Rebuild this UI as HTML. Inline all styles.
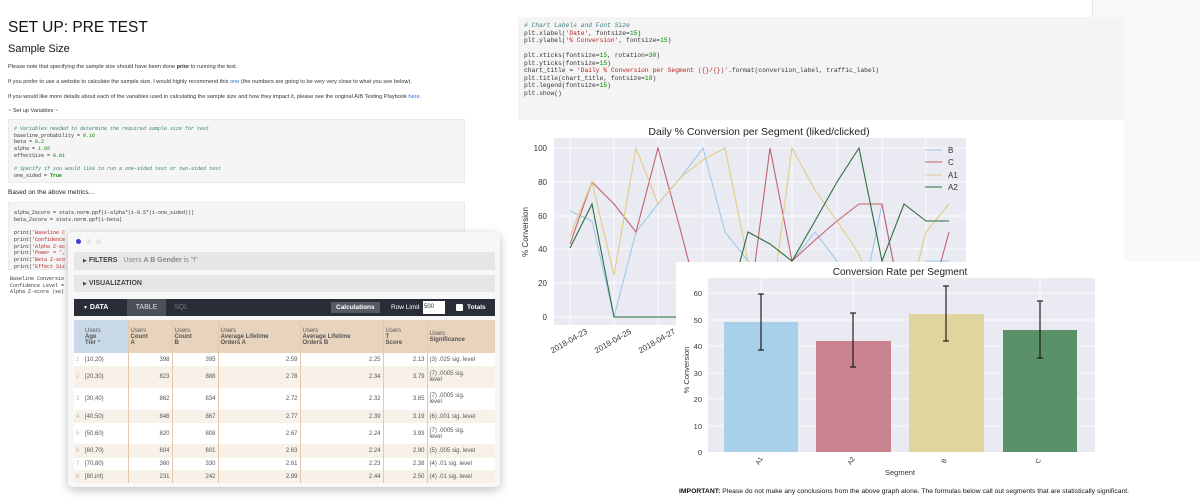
<!DOCTYPE html>
<html><head><meta charset="utf-8"><style>
*{margin:0;padding:0;box-sizing:border-box}
body{width:1200px;height:500px;overflow:hidden;background:#fff;font-family:"Liberation Sans",sans-serif;color:#222;position:relative}
.a{position:absolute;white-space:nowrap}
.p{font-size:5.6px;color:#333}
.code{position:absolute;background:#f5f5f5;border:1px solid #eaeaea}
.mono{font-family:"Liberation Mono",monospace;color:#333}
.cm{color:#408080;font-style:italic}.nm{color:#080}.st{color:#ba2121}.kw{color:#080;font-weight:bold}
table{border-collapse:collapse;font-size:6px;color:#555}
td{border-right:1px solid #e3c8ac;padding:0 2px;vertical-align:middle}
</style></head><body>
<div class="a" style="left:8px;top:19px;font-size:15.5px;color:#111">SET UP: PRE TEST</div>
<div class="a" style="left:8px;top:43px;font-size:11px;color:#111">Sample Size</div>
<div class="a p" style="left:8px;top:64px">Please note that specifying the sample size should have been done <b>prior</b> to running the test.</div>
<div class="a p" style="left:8px;top:79px">If you prefer to use a website to calculate the sample size, I would highly recommend this <span style="color:#2a6fd6">one</span> (the numbers are going to be very very close to what you see below).</div>
<div class="a p" style="left:8px;top:94px">If you would like more details about each of the variables used in calculating the sample size and how they impact it, please see the original A/B Testing Playbook <span style="color:#2a6fd6">here</span>.</div>
<div class="a p" style="left:8px;top:108px">~ Set up Variables ~</div>
<div class="code mono" style="left:8px;top:119px;width:457px;height:64px;font-size:5px;line-height:6.7px;padding:6px 5px">
<div class="cm"># Variables needed to determine the required sample size for test</div>
<div>baseline_probability = <span class="nm">0.16</span></div>
<div>beta = <span class="nm">0.2</span></div>
<div>alpha = <span class="nm">1.05</span></div>
<div>effectSize = <span class="nm">0.01</span></div>
<div>&nbsp;</div>
<div class="cm"># Specify if you would like to run a one-sided test or two-sided test</div>
<div>one_sided = <span class="kw">True</span></div>
</div>
<div class="a" style="left:8px;top:189px;font-size:6.5px;color:#222">Based on the above metrics...</div>
<div class="code mono" style="left:8px;top:202px;width:457px;height:68px;font-size:5px;line-height:6.7px;padding:7px 5px">
<div>alpha_Zscore = stats.norm.ppf(1-alpha*(1-0.5*(1-one_sided)))</div>
<div>beta_Zscore = stats.norm.ppf(1-beta)</div>
<div>&nbsp;</div>
<div>print(<span class="st">'Baseline C</span></div>
<div>print(<span class="st">'Confidence</span></div>
<div>print(<span class="st">'Alpha Z-sc</span></div>
<div>print(<span class="st">'Power = ',</span></div>
<div>print(<span class="st">'Beta Z-sco</span></div>
<div>print(<span class="st">'Effect Siz</span></div>
</div>
<div class="a mono" style="left:10px;top:276px;font-size:5px;line-height:6.7px">Baseline Conversio<br>Confidence Level =<br>Alpha Z-score (se)</div>

<!-- right panel -->
<div class="a" style="left:1092px;top:0;width:108px;height:17px;background:#f9fafb;border-left:1px solid #e4e4e4"></div>
<div class="a" style="left:1124px;top:0;width:76px;height:262px;background:#f8f9fb"></div>
<div class="code mono" style="left:518px;top:17px;width:606px;height:103px;font-size:6.3px;line-height:7.55px;padding:5px 6px;border:none;background:#f4f4f4">
<div class="cm"># Chart Labels and Font Size</div>
<div>plt.xlabel(<span class="st">'Date'</span>, fontsize=<span class="nm">15</span>)</div>
<div>plt.ylabel(<span class="st">'% Conversion'</span>, fontsize=<span class="nm">15</span>)</div>
<div>&nbsp;</div>
<div>plt.xticks(fontsize=<span class="nm">15</span>, rotation=<span class="nm">30</span>)</div>
<div>plt.yticks(fontsize=<span class="nm">15</span>)</div>
<div>chart_title = <span class="st">'Daily % Conversion per Segment ({}/{})'</span>.format(conversion_label, traffic_label)</div>
<div>plt.title(chart_title, fontsize=<span class="nm">18</span>)</div>
<div>plt.legend(fontsize=<span class="nm">15</span>)</div>
<div>plt.show()</div>
</div>

<svg class="a" style="left:0;top:0" width="1200" height="500" font-family="Liberation Sans, sans-serif">
<text x="759" y="135" font-size="10.5" text-anchor="middle" fill="#222">Daily % Conversion per Segment (liked/clicked)</text>
<rect x="554" y="138" width="412" height="187" fill="#eaeaf2"/>
<g stroke="#fff" stroke-width="0.8">
<line x1="554" x2="966" y1="148" y2="148"/><line x1="554" x2="966" y1="182" y2="182"/><line x1="554" x2="966" y1="216" y2="216"/><line x1="554" x2="966" y1="249" y2="249"/><line x1="554" x2="966" y1="283" y2="283"/><line x1="554" x2="966" y1="317" y2="317"/>
<line x1="570" x2="570" y1="138" y2="325"/><line x1="614" x2="614" y1="138" y2="325"/><line x1="658" x2="658" y1="138" y2="325"/><line x1="703" x2="703" y1="138" y2="325"/><line x1="748" x2="748" y1="138" y2="325"/><line x1="792" x2="792" y1="138" y2="325"/><line x1="837" x2="837" y1="138" y2="325"/><line x1="882" x2="882" y1="138" y2="325"/><line x1="926" x2="926" y1="138" y2="325"/>
</g>
<g font-size="8" fill="#333" text-anchor="end">
<text x="547" y="151">100</text><text x="547" y="185">80</text><text x="547" y="219">60</text><text x="547" y="252">40</text><text x="547" y="286">20</text><text x="547" y="320">0</text>
</g>
<text transform="translate(528,232) rotate(-90)" font-size="8" text-anchor="middle" fill="#333">% Conversion</text>
<g font-size="8" fill="#333" text-anchor="end">
<text transform="translate(588,333) rotate(-30)">2018-04-23</text>
<text transform="translate(632,333) rotate(-30)">2018-04-25</text>
<text transform="translate(676,333) rotate(-30)">2018-04-27</text>
</g>
<g fill="none" stroke-width="1.1">
<polyline stroke="#9ecae9" points="570,211 592,221 614,317 636,232 658,204 681,177 703,148 725,232 748,261 770,317 792,261 815,232 837,261 859,317 882,204 904,317 926,261 949,261"/>
<polyline stroke="#c1626f" points="570,244 592,182 614,204 636,232 658,148 681,232 703,317 725,317 748,317 770,148 792,261 815,240 837,221 859,204 882,204 904,317 926,317 949,232"/>
<polyline stroke="#e0cc86" points="570,236 592,182 614,275 636,148 658,204 681,177 703,160 725,148 748,261 770,317 792,148 815,190 837,221 859,254 882,317 904,317 926,232 949,204"/>
<polyline stroke="#2d6e3a" points="570,248 592,204 614,317 636,317 658,317 681,317 703,317 725,317 748,232 770,244 792,261 815,221 837,182 859,148 882,261 904,204 926,221 949,221"/>
</g>
<g font-size="8" fill="#333">
<line x1="925" x2="942" y1="150" y2="150" stroke="#9ecae9" stroke-width="1.1"/><text x="948" y="153">B</text>
<line x1="925" x2="942" y1="162" y2="162" stroke="#c1626f" stroke-width="1.1"/><text x="948" y="165">C</text>
<line x1="925" x2="942" y1="175" y2="175" stroke="#e0cc86" stroke-width="1.1"/><text x="948" y="178">A1</text>
<line x1="925" x2="942" y1="187" y2="187" stroke="#2d6e3a" stroke-width="1.1"/><text x="948" y="190">A2</text>
</g>

<!-- bar chart -->
<rect x="676" y="262" width="448" height="238" fill="#fff"/>
<text x="900" y="275" font-size="10" text-anchor="middle" fill="#222">Conversion Rate per Segment</text>
<rect x="708" y="278" width="387" height="174" fill="#eaeaf2"/>
<g stroke="#fff" stroke-width="0.8">
<line x1="708" x2="1095" y1="293" y2="293"/><line x1="708" x2="1095" y1="320" y2="320"/><line x1="708" x2="1095" y1="346" y2="346"/><line x1="708" x2="1095" y1="373" y2="373"/><line x1="708" x2="1095" y1="399" y2="399"/><line x1="708" x2="1095" y1="426" y2="426"/>
<line x1="761" x2="761" y1="278" y2="452"/><line x1="853" x2="853" y1="278" y2="452"/><line x1="946" x2="946" y1="278" y2="452"/><line x1="1040" x2="1040" y1="278" y2="452"/>
</g>
<g font-size="7.5" fill="#333" text-anchor="end">
<text x="702" y="296">60</text><text x="702" y="323">50</text><text x="702" y="349">40</text><text x="702" y="376">30</text><text x="702" y="402">20</text><text x="702" y="429">10</text><text x="702" y="455">0</text>
</g>
<text transform="translate(689,370) rotate(-90)" font-size="7.5" text-anchor="middle" fill="#333">% Conversion</text>
<rect x="724" y="322" width="74" height="130" fill="#a9d0ea"/>
<rect x="816" y="341" width="75" height="111" fill="#c8838e"/>
<rect x="909" y="314" width="75" height="138" fill="#e0d59e"/>
<rect x="1003" y="330" width="74" height="122" fill="#5a9168"/>
<g stroke="#111" stroke-width="1.1">
<line x1="761" x2="761" y1="294" y2="350"/><line x1="758" x2="764" y1="294" y2="294"/><line x1="758" x2="764" y1="350" y2="350"/>
<line x1="853" x2="853" y1="313" y2="367"/><line x1="850" x2="856" y1="313" y2="313"/><line x1="850" x2="856" y1="367" y2="367"/>
<line x1="946" x2="946" y1="286" y2="341"/><line x1="943" x2="949" y1="286" y2="286"/><line x1="943" x2="949" y1="341" y2="341"/>
<line x1="1040" x2="1040" y1="301" y2="358"/><line x1="1037" x2="1043" y1="301" y2="301"/><line x1="1037" x2="1043" y1="358" y2="358"/>
</g>
<g font-size="6.5" fill="#333" text-anchor="middle">
<text transform="translate(761,462) rotate(-60)">A1</text><text transform="translate(853,462) rotate(-60)">A2</text><text transform="translate(946,462) rotate(-60)">B</text><text transform="translate(1040,462) rotate(-60)">C</text>
</g>
<text x="900" y="475" font-size="7.5" text-anchor="middle" fill="#333">Segment</text>
<text x="679" y="493" font-size="6.8" fill="#111"><tspan font-weight="bold">IMPORTANT:</tspan> Please do not make any conclusions from the above graph alone. The formulas below call out segments that are statistically significant.</text>
</svg>

<!-- table window -->
<div class="a" style="left:68px;top:232px;width:432px;height:255px;background:#f7f7f7;border-radius:5px;box-shadow:0 3px 10px rgba(0,0,0,.25)">
 <div class="a" style="left:8px;top:7px;width:5px;height:5px;border-radius:50%;background:#3b3bd6"></div>
 <div class="a" style="left:18px;top:7px;width:5px;height:5px;border-radius:50%;background:#e6e6e6"></div>
 <div class="a" style="left:28px;top:7px;width:5px;height:5px;border-radius:50%;background:#e6e6e6"></div>
 <div class="a" style="left:6px;top:20px;width:421px;height:18px;background:#e6e6e6;font-size:7px;line-height:18px;padding-left:9px;color:#444"><span style="font-size:5px">▶</span> <b>FILTERS</b> &nbsp;&nbsp;<span style="color:#888">Users <b>A B Gender</b> is "f"</span></div>
 <div class="a" style="left:6px;top:43px;width:421px;height:17px;background:#e6e6e6;font-size:7px;line-height:17px;padding-left:9px;color:#444"><span style="font-size:5px">▶</span> <b>VISUALIZATION</b></div>
 <div class="a" style="left:6px;top:67px;width:421px;height:17px;background:#282d38;font-size:7px;line-height:17px;color:#fff">
  <span class="a" style="left:9px"><span style="font-size:5px">▼</span> <b>DATA</b></span>
  <span class="a" style="left:53px;width:39px;height:17px;background:#4a4f58;text-align:center;color:#ddd">TABLE</span>
  <span class="a" style="left:100px;color:#777">SQL</span>
  <span class="a" style="left:257px;top:3px;height:11px;line-height:11px;padding:0 5px;background:#555a63;font-weight:bold;font-size:6.5px">Calculations</span>
  <span class="a" style="left:317px;font-size:6.5px">Row Limit</span>
  <span class="a" style="left:349px;top:2px;width:22px;height:13px;background:#fff;color:#333;line-height:13px;font-size:6px;padding-left:1px">500</span>
  <span class="a" style="left:382px;top:5px;width:7px;height:7px;background:#fff;border-radius:1px"></span>
  <span class="a" style="left:393px;font-size:6.5px;font-weight:bold">Totals</span>
 </div>
 <table class="a" style="left:6px;top:88px;width:421px">
  <tr style="background:#e8d3bd;height:33px;vertical-align:top">
   <td style="background:#c9d9e8;width:9px;border:none"></td>
   <td style="background:#c9d9e8;width:45px">Users<br><b>Age<br>Tier</b> ^</td>
   <td style="width:44px">Users<br><b>Count<br>A</b></td>
   <td style="width:46px">Users<br><b>Count<br>B</b></td>
   <td style="width:82px">Users<br><b>Average Lifetime<br>Orders A</b></td>
   <td style="width:83px">Users<br><b>Average Lifetime<br>Orders B</b></td>
   <td style="width:44px">Users<br><b>T<br>Score</b></td>
   <td style="border:none">Users<br><b>Significance</b></td>
  </tr>
  <tr style="height:13px;background:#fff"><td style="color:#bbb;border:none">1</td><td>[10,20)</td><td align="right">398</td><td align="right">395</td><td align="right">2.59</td><td align="right">2.25</td><td align="right">2.13</td><td style="border:none">(3) .025 sig. level</td></tr>
  <tr style="height:22px;background:#f8f1ea"><td style="color:#bbb;border:none">2</td><td>[20,30)</td><td align="right">823</td><td align="right">888</td><td align="right">2.78</td><td align="right">2.34</td><td align="right">3.79</td><td style="border:none">(7) .0005 sig.<br>level</td></tr>
  <tr style="height:22px;background:#fff"><td style="color:#bbb;border:none">3</td><td>[30,40)</td><td align="right">862</td><td align="right">834</td><td align="right">2.72</td><td align="right">2.32</td><td align="right">3.65</td><td style="border:none">(7) .0005 sig.<br>level</td></tr>
  <tr style="height:13px;background:#f8f1ea"><td style="color:#bbb;border:none">4</td><td>[40,50)</td><td align="right">846</td><td align="right">867</td><td align="right">2.77</td><td align="right">2.39</td><td align="right">3.19</td><td style="border:none">(6) .001 sig. level</td></tr>
  <tr style="height:21px;background:#fff"><td style="color:#bbb;border:none">5</td><td>[50,60)</td><td align="right">820</td><td align="right">808</td><td align="right">2.67</td><td align="right">2.24</td><td align="right">3.93</td><td style="border:none">(7) .0005 sig.<br>level</td></tr>
  <tr style="height:14px;background:#f8f1ea"><td style="color:#bbb;border:none">6</td><td>[60,70)</td><td align="right">604</td><td align="right">601</td><td align="right">2.63</td><td align="right">2.24</td><td align="right">2.90</td><td style="border:none">(5) .005 sig. level</td></tr>
  <tr style="height:12px;background:#fff"><td style="color:#bbb;border:none">7</td><td>[70,80)</td><td align="right">360</td><td align="right">330</td><td align="right">2.61</td><td align="right">2.23</td><td align="right">2.38</td><td style="border:none">(4) .01 sig. level</td></tr>
  <tr style="height:13px;background:#f8f1ea"><td style="color:#bbb;border:none">8</td><td>[80,inf)</td><td align="right">231</td><td align="right">242</td><td align="right">2.99</td><td align="right">2.44</td><td align="right">2.50</td><td style="border:none">(4) .01 sig. level</td></tr>
 </table>
</div>
</body></html>
